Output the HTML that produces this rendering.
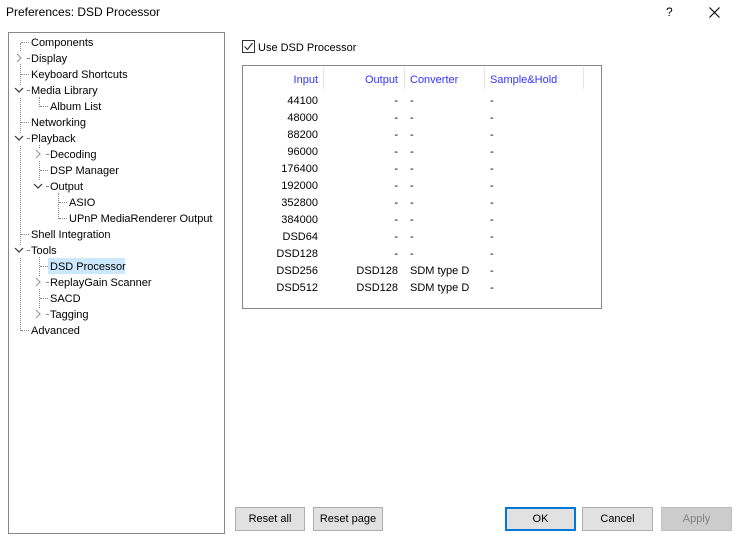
<!DOCTYPE html>
<html><head><meta charset="utf-8"><style>
*{margin:0;padding:0;box-sizing:border-box}
body{width:737px;height:537px;background:#fff;font-family:"Liberation Sans",sans-serif;font-size:11px;color:#000;position:relative;overflow:hidden}
.a{position:absolute;white-space:nowrap;line-height:16px}
.t{position:absolute;white-space:nowrap;line-height:16px;height:16px;margin-top:1px}
.hd{border-top:1px dotted #888;position:absolute;height:0}
.vd{border-left:1px dotted #888;position:absolute;width:0}
.btn{position:absolute;height:24px;border:1px solid #adadad;background:#e1e1e1;text-align:center;line-height:23px}
.r{text-align:right}
.h{color:#33f}
</style></head><body>
<div class="a" style="left:6px;top:4px;font-size:12px">Preferences: DSD Processor</div>
<div class="a" style="left:666px;top:4px;font-size:12px">?</div>
<svg style="position:absolute;left:709px;top:7px" width="11" height="11"><path d="M0.5 0.5L10.5 10.5M10.5 0.5L0.5 10.5" stroke="#000" stroke-width="1.1"/></svg>

<div style="position:absolute;left:8px;top:32px;width:217px;height:502px;border:1px solid #828790"></div>
<div class="vd" style="left:20px;top:43px;height:288px"></div>
<div class="vd" style="left:39px;top:97px;height:10px"></div>
<div class="vd" style="left:39px;top:145px;height:41px"></div>
<div class="vd" style="left:58px;top:193px;height:26px"></div>
<div class="vd" style="left:39px;top:257px;height:57px"></div>
<div style="position:absolute;left:15px;top:52px;width:10px;height:12px;background:#fff"></div>
<div style="position:absolute;left:14px;top:85px;width:12px;height:12px;background:#fff"></div>
<div style="position:absolute;left:14px;top:133px;width:12px;height:12px;background:#fff"></div>
<div style="position:absolute;left:14px;top:245px;width:12px;height:12px;background:#fff"></div>
<div style="position:absolute;left:34px;top:148px;width:10px;height:12px;background:#fff"></div>
<div style="position:absolute;left:33px;top:181px;width:12px;height:12px;background:#fff"></div>
<div style="position:absolute;left:34px;top:276px;width:10px;height:12px;background:#fff"></div>
<div style="position:absolute;left:34px;top:308px;width:10px;height:12px;background:#fff"></div>
<svg style="position:absolute;left:0;top:0" width="230" height="340" fill="none" stroke="#999" stroke-width="1.2">
<path d="M17 54l4 4l-4 4"/><path d="M36 150l4 4l-4 4"/><path d="M36 278l4 4l-4 4"/><path d="M36 310l4 4l-4 4"/>
<path stroke="#333" d="M15 88l4 4l4-4M15 136l4 4l4-4M15 248l4 4l4-4M34 184l4 4l4-4"/>
</svg>
<div class="hd" style="left:21px;top:42px;width:8px"></div>
<div class="hd" style="left:27px;top:58px;width:2px"></div>
<div class="hd" style="left:21px;top:74px;width:8px"></div>
<div class="hd" style="left:27px;top:90px;width:2px"></div>
<div class="hd" style="left:40px;top:106px;width:8px"></div>
<div class="hd" style="left:21px;top:122px;width:8px"></div>
<div class="hd" style="left:27px;top:138px;width:2px"></div>
<div class="hd" style="left:46px;top:154px;width:2px"></div>
<div class="hd" style="left:40px;top:170px;width:8px"></div>
<div class="hd" style="left:46px;top:186px;width:2px"></div>
<div class="hd" style="left:59px;top:202px;width:8px"></div>
<div class="hd" style="left:59px;top:218px;width:8px"></div>
<div class="hd" style="left:21px;top:234px;width:8px"></div>
<div class="hd" style="left:27px;top:250px;width:2px"></div>
<div class="hd" style="left:40px;top:266px;width:8px"></div>
<div class="hd" style="left:46px;top:282px;width:2px"></div>
<div class="hd" style="left:40px;top:298px;width:8px"></div>
<div class="hd" style="left:46px;top:314px;width:2px"></div>
<div class="hd" style="left:21px;top:330px;width:8px"></div>
<div style="position:absolute;left:48px;top:258px;width:77px;height:16px;background:#cce8ff"></div>
<div class="t" style="left:31px;top:34px">Components</div>
<div class="t" style="left:31px;top:50px">Display</div>
<div class="t" style="left:31px;top:66px">Keyboard Shortcuts</div>
<div class="t" style="left:31px;top:82px">Media Library</div>
<div class="t" style="left:50px;top:98px">Album List</div>
<div class="t" style="left:31px;top:114px">Networking</div>
<div class="t" style="left:31px;top:130px">Playback</div>
<div class="t" style="left:50px;top:146px">Decoding</div>
<div class="t" style="left:50px;top:162px">DSP Manager</div>
<div class="t" style="left:50px;top:178px">Output</div>
<div class="t" style="left:69px;top:194px">ASIO</div>
<div class="t" style="left:69px;top:210px">UPnP MediaRenderer Output</div>
<div class="t" style="left:31px;top:226px">Shell Integration</div>
<div class="t" style="left:31px;top:242px">Tools</div>
<div class="t" style="left:50px;top:258px">DSD Processor</div>
<div class="t" style="left:50px;top:274px">ReplayGain Scanner</div>
<div class="t" style="left:50px;top:290px">SACD</div>
<div class="t" style="left:50px;top:306px">Tagging</div>
<div class="t" style="left:31px;top:322px">Advanced</div>

<svg style="position:absolute;left:242px;top:40px" width="13" height="13"><rect x="0.5" y="0.5" width="12" height="12" fill="#fff" stroke="#333"/><path d="M2.5 6.5l3 3l5-6.5" fill="none" stroke="#333" stroke-width="1.2"/></svg>
<div class="a" style="left:258px;top:40px">Use DSD Processor</div>

<div style="position:absolute;left:242px;top:65px;width:360px;height:244px;border:1px solid #828790"></div>
<div style="position:absolute;left:323px;top:67px;width:1px;height:22px;background:#e5e5e5"></div>
<div style="position:absolute;left:404px;top:67px;width:1px;height:22px;background:#e5e5e5"></div>
<div style="position:absolute;left:484px;top:67px;width:1px;height:22px;background:#e5e5e5"></div>
<div style="position:absolute;left:583px;top:67px;width:1px;height:22px;background:#e5e5e5"></div>
<div class="a r h" style="left:250px;width:68px;top:72px">Input</div>
<div class="a r h" style="left:330px;width:68px;top:72px">Output</div>
<div class="a h" style="left:410px;top:72px">Converter</div>
<div class="a h" style="left:490px;top:72px">Sample&amp;Hold</div>
<div style="position:absolute;left:250px;top:93px;line-height:17px">
<div class="r" style="width:68px">44100<br>48000<br>88200<br>96000<br>176400<br>192000<br>352800<br>384000<br>DSD64<br>DSD128<br>DSD256<br>DSD512</div>
</div>
<div style="position:absolute;left:330px;top:93px;line-height:17px;width:68px" class="r">-<br>-<br>-<br>-<br>-<br>-<br>-<br>-<br>-<br>-<br>DSD128<br>DSD128</div>
<div style="position:absolute;left:410px;top:93px;line-height:17px">-<br>-<br>-<br>-<br>-<br>-<br>-<br>-<br>-<br>-<br>SDM type D<br>SDM type D</div>
<div style="position:absolute;left:490px;top:93px;line-height:17px">-<br>-<br>-<br>-<br>-<br>-<br>-<br>-<br>-<br>-<br>-<br>-</div>

<div class="btn" style="left:235px;top:507px;width:70px">Reset all</div>
<div class="btn" style="left:313px;top:507px;width:70px">Reset page</div>
<div class="btn" style="left:505px;top:507px;width:71px;border:2px solid #0078d7;line-height:21px">OK</div>
<div class="btn" style="left:582px;top:507px;width:71px">Cancel</div>
<div class="btn" style="left:661px;top:507px;width:71px;background:#ccc;border-color:#bfbfbf;color:#838383">Apply</div>
</body></html>
